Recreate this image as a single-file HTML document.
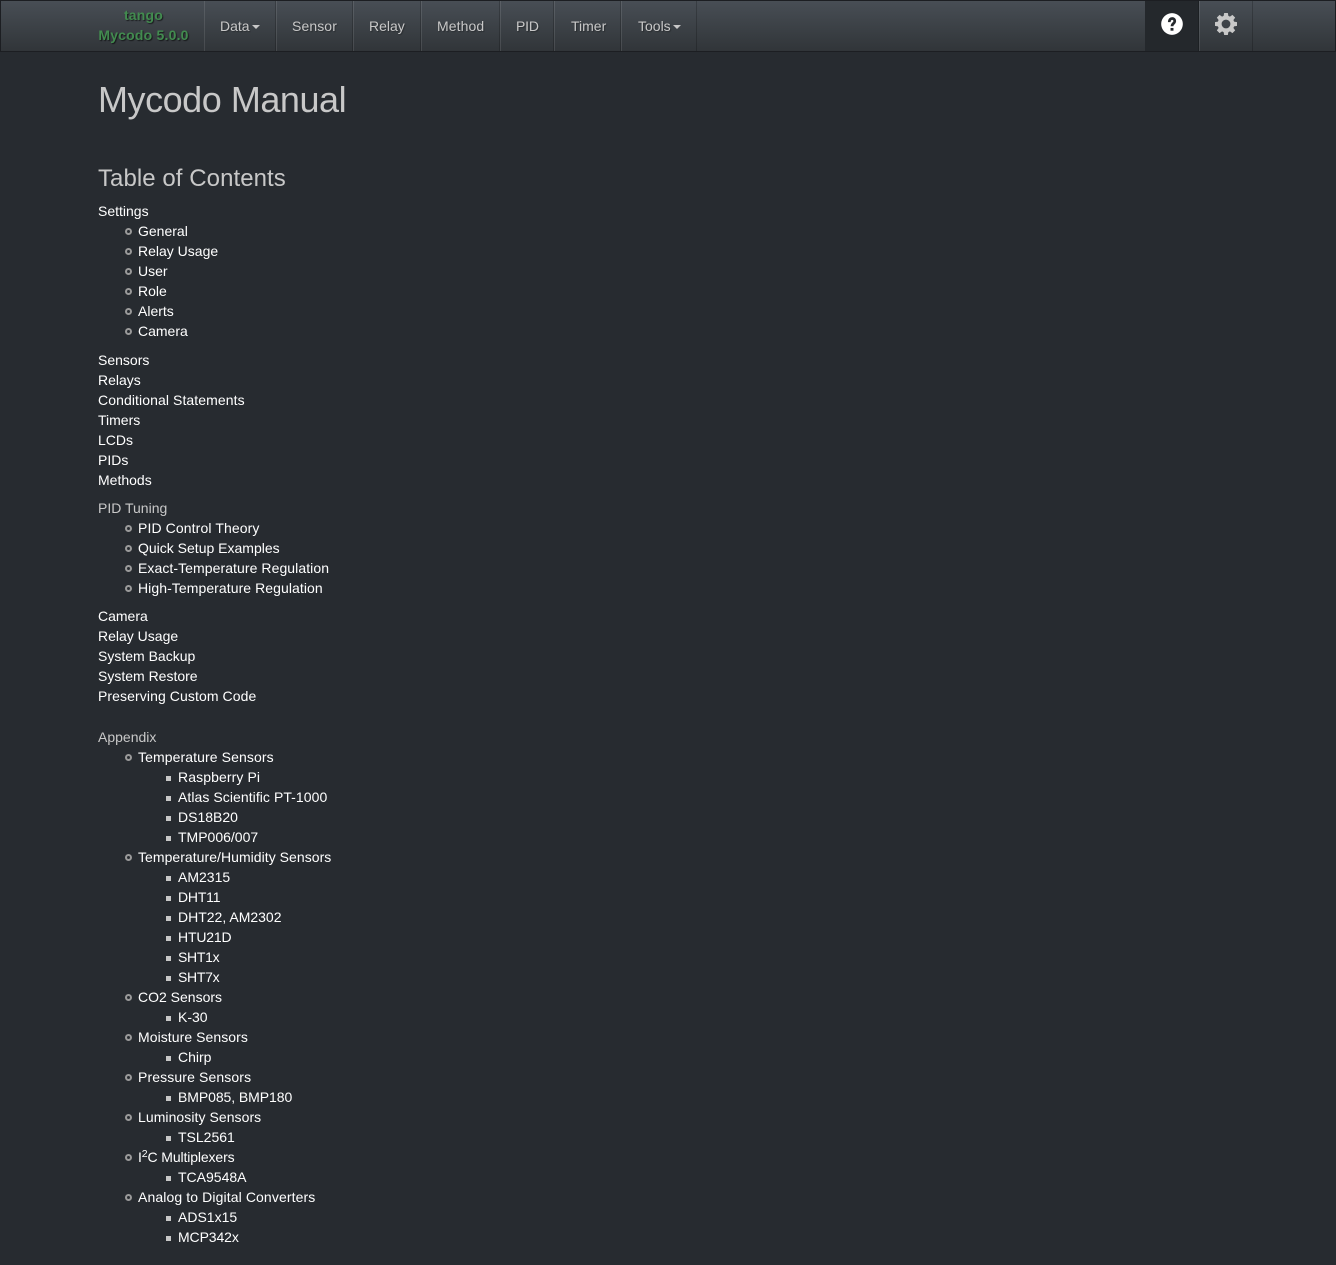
<!DOCTYPE html>
<html lang="en">
<head>
<meta charset="utf-8">
<title>Mycodo Manual</title>
<style>
*,*::before,*::after{box-sizing:border-box}
html,body{margin:0;padding:0;width:1336px;height:1265px;overflow:hidden}
body{background:#272b30;color:#c8c8c8;font:14px/20px "Liberation Sans",Arial,sans-serif}
a{color:#fff;text-decoration:none}
nav{position:absolute;left:0;top:0;width:1336px;height:52px;border:1px solid #1c1e22;background:linear-gradient(#484e55,#3a3f44 60%,#313539)}
.brand{position:absolute;left:96.5px;top:4px;width:92px;text-align:center;font-weight:bold;font-size:14px;line-height:20px;letter-spacing:.2px;color:#428b4f;text-shadow:1px 1px 1px rgba(0,0,0,.6)}
nav ul{list-style:none;margin:0;padding:0;position:absolute;top:0;display:flex;height:50px}
nav ul.l{left:203px}
nav ul.r{left:1144px}
nav li a{display:block;height:50px;padding:15px 0 15px 15px;color:#c8c8c8;border-left:1px solid rgba(255,255,255,.1);border-right:1px solid rgba(0,0,0,.2);text-shadow:1px 1px 1px rgba(0,0,0,.3);white-space:nowrap}
nav ul.r a{width:54px;padding:0;position:relative}
nav ul.r a.on{background:#24282c;border-left:0}
nav ul.r a.on svg{left:16px}
nav svg{position:absolute;left:15px;top:12px}
.caret{display:inline-block;width:0;height:0;margin-left:2px;vertical-align:middle;border-top:4px solid #c8c8c8;border-left:4px solid transparent;border-right:4px solid transparent}
main{position:absolute;left:98px;top:0;width:1140px}
h1{position:absolute;left:0;top:80px;margin:0;font-size:36px;line-height:40px;font-weight:500;white-space:nowrap;letter-spacing:-.46px}
h3{position:absolute;left:0;top:166px;margin:0;font-size:24px;line-height:26px;font-weight:500;white-space:nowrap;letter-spacing:.06px}
.toc{position:absolute;left:0;margin:0;padding:0;list-style:none}
.toc ul{margin:0;padding:0 0 0 40px;list-style:none}
.toc ul>li{position:relative}
.toc ul>li::before{content:"";position:absolute;left:-13px;top:7px;width:7px;height:7px;border:2px solid #9a9a9a;border-radius:50%}
.toc ul ul>li::before{left:-12px;top:9px;width:5px;height:5px;border:0;border-radius:0;background:#c8c8c8}
sup{font-size:10.5px;line-height:0;position:relative;top:-.5em;vertical-align:baseline}
</style>
</head>
<body>
<nav>
  <div class="brand">tango<br>Mycodo 5.0.0</div>
  <ul class="l">
    <li style="width:72px"><a href="#">Data<span class="caret"></span></a></li>
    <li style="width:77px"><a href="#" style="letter-spacing:.1px">Sensor</a></li>
    <li style="width:68px"><a href="#">Relay</a></li>
    <li style="width:79px"><a href="#" style="letter-spacing:.1px">Method</a></li>
    <li style="width:54px"><a href="#" style="letter-spacing:-.2px">PID</a></li>
    <li style="width:67px"><a href="#" style="padding-left:16px">Timer</a></li>
    <li style="width:76px"><a href="#" style="padding-left:16px">Tools<span class="caret"></span></a></li>
  </ul>
  <ul class="r">
    <li><a class="on" href="#"><svg width="22" height="22" viewBox="0 0 24 24"><circle cx="12" cy="12" r="11.8" fill="#fff"/><path d="M9 10c0-2.6 1.4-4 3.2-4 1.7 0 2.8 1.2 2.8 2.9 0 2.6-3 2.4-3 5.6" fill="none" stroke="#24282c" stroke-width="3"/><rect x="10.4" y="16.3" width="3.2" height="3" fill="#24282c"/></svg></a></li>
    <li><a href="#"><svg width="22" height="22" viewBox="0 0 24 24"><path fill="#c8c8c8" fill-rule="evenodd" d="M10 0h4l.6 3.2 1.7.7L19 2l3 3-1.9 2.7.7 1.7L24 10v4l-3.2.6-.7 1.7L22 19l-3 3-2.7-1.9-1.7.7L14 24h-4l-.6-3.2-1.7-.7L5 22l-3-3 1.9-2.7-.7-1.7L0 14v-4l3.2-.6.7-1.7L2 5l3-3 2.7 1.9 1.7-.7zM12 7.2a4.8 4.8 0 1 0 0 9.6 4.8 4.8 0 0 0 0-9.6z"/></svg></a></li>
  </ul>
</nav>
<main>
  <h1>Mycodo Manual</h1>
  <h3>Table of Contents</h3>
  <ul class="toc" style="top:201px">
    <li><a href="#">Settings</a>
      <ul>
        <li><a href="#">General</a></li>
        <li><a href="#">Relay Usage</a></li>
        <li><a href="#">User</a></li>
        <li><a href="#">Role</a></li>
        <li><a href="#">Alerts</a></li>
        <li><a href="#">Camera</a></li>
      </ul>
    </li>
  </ul>
  <ul class="toc" style="top:350px">
    <li><a href="#">Sensors</a></li>
    <li><a href="#">Relays</a></li>
    <li><a href="#" style="letter-spacing:.09px">Conditional Statements</a></li>
    <li><a href="#">Timers</a></li>
    <li><a href="#">LCDs</a></li>
    <li><a href="#">PIDs</a></li>
    <li><a href="#">Methods</a></li>
  </ul>
  <ul class="toc" style="top:498px">
    <li>PID Tuning
      <ul>
        <li><a href="#" style="letter-spacing:.11px">PID Control Theory</a></li>
        <li><a href="#">Quick Setup Examples</a></li>
        <li><a href="#" style="letter-spacing:.07px">Exact-Temperature Regulation</a></li>
        <li><a href="#" style="letter-spacing:.07px">High-Temperature Regulation</a></li>
      </ul>
    </li>
  </ul>
  <ul class="toc" style="top:606px">
    <li><a href="#">Camera</a></li>
    <li><a href="#">Relay Usage</a></li>
    <li><a href="#">System Backup</a></li>
    <li><a href="#">System Restore</a></li>
    <li><a href="#" style="letter-spacing:.09px">Preserving Custom Code</a></li>
  </ul>
  <ul class="toc" style="top:727px">
    <li>Appendix
      <ul>
        <li><a href="#" style="letter-spacing:.1px">Temperature Sensors</a>
          <ul>
            <li><a href="#" style="letter-spacing:.1px">Raspberry Pi</a></li>
            <li><a href="#" style="letter-spacing:.06px">Atlas Scientific PT-1000</a></li>
            <li><a href="#">DS18B20</a></li>
            <li><a href="#">TMP006/007</a></li>
          </ul>
        </li>
        <li><a href="#" style="letter-spacing:.04px">Temperature/Humidity Sensors</a>
          <ul>
            <li><a href="#">AM2315</a></li>
            <li><a href="#" style="letter-spacing:-.2px">DHT11</a></li>
            <li><a href="#">DHT22, AM2302</a></li>
            <li><a href="#" style="letter-spacing:-.17px">HTU21D</a></li>
            <li><a href="#" style="letter-spacing:-.3px">SHT1x</a></li>
            <li><a href="#" style="letter-spacing:-.3px">SHT7x</a></li>
          </ul>
        </li>
        <li><a href="#">CO2 Sensors</a>
          <ul><li><a href="#">K-30</a></li></ul>
        </li>
        <li><a href="#" style="letter-spacing:.06px">Moisture Sensors</a>
          <ul><li><a href="#">Chirp</a></li></ul>
        </li>
        <li><a href="#" style="letter-spacing:.12px">Pressure Sensors</a>
          <ul><li><a href="#" style="letter-spacing:-.07px">BMP085, BMP180</a></li></ul>
        </li>
        <li><a href="#" style="letter-spacing:.06px">Luminosity Sensors</a>
          <ul><li><a href="#">TSL2561</a></li></ul>
        </li>
        <li><a href="#" style="letter-spacing:-.12px">I<sup>2</sup>C Multiplexers</a>
          <ul><li><a href="#">TCA9548A</a></li></ul>
        </li>
        <li><a href="#" style="letter-spacing:.11px">Analog to Digital Converters</a>
          <ul>
            <li><a href="#">ADS1x15</a></li>
            <li><a href="#" style="letter-spacing:-.1px">MCP342x</a></li>
          </ul>
        </li>
      </ul>
    </li>
  </ul>
</main>
</body>
</html>
